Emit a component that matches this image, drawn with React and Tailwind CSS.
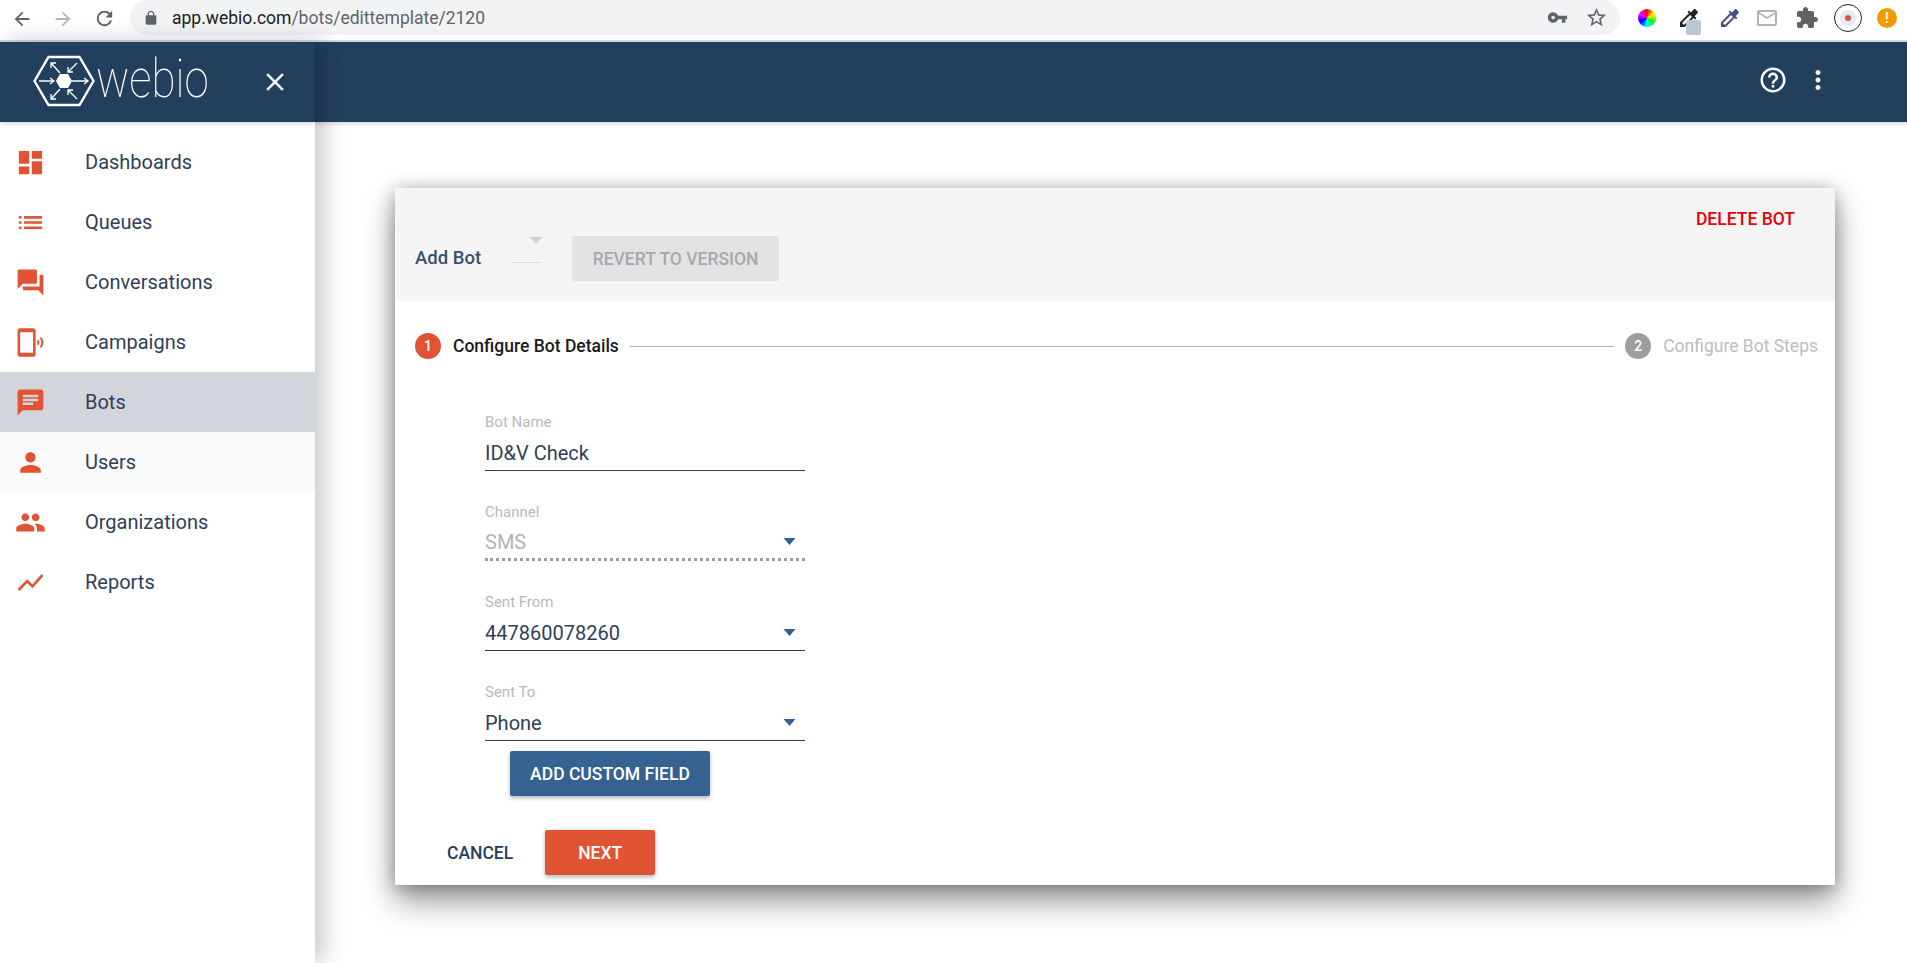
import React from "react";

const ICONS = {
  dashboard: "M3 13h8V3H3v10zm0 8h8v-6H3v6zm10 0h8V11h-8v10zm0-18v6h8V3h-8z",
  list: "M3 13h2v-2H3v2zm0 4h2v-2H3v2zm0-8h2V7H3v2zm4 4h14v-2H7v2zm0 4h14v-2H7v2zM7 7v2h14V7H7z",
  forum: "M21 6h-2v9H6v2c0 .55.45 1 1 1h11l4 4V7c0-.55-.45-1-1-1zm-4 6V3c0-.55-.45-1-1-1H3c-.55 0-1 .45-1 1v14l4-4h10c.55 0 1-.45 1-1z",
  phone: "M20.1 7.7l-1 1c1.8 1.8 1.8 4.6 0 6.5l1 1c2.5-2.3 2.5-6.1 0-8.5zM18 9.8l-1 1c.5.7.5 1.6 0 2.3l1 1c1.2-1.2 1.2-3 0-4.3zM14 1H4c-1.1 0-2 .9-2 2v18c0 1.1.9 2 2 2h10c1.1 0 2-.9 2-2V3c0-1.1-.9-2-2-2zm0 19H4V4h10v16z",
  chat: "M20 2H4c-1.1 0-1.99.9-1.99 2L2 22l4-4h14c1.1 0 2-.9 2-2V4c0-1.1-.9-2-2-2zM6 9h12v2H6V9zm8 5H6v-2h8v2zm4-6H6V6h12v2z",
  person: "M12 12c2.21 0 4-1.79 4-4s-1.79-4-4-4-4 1.79-4 4 1.79 4 4 4zm0 2c-2.67 0-8 1.34-8 4v2h16v-2c0-2.66-5.33-4-8-4z",
  people: "M16 11c1.66 0 2.99-1.34 2.99-3S17.66 5 16 5c-1.66 0-3 1.34-3 3s1.34 3 3 3zm-8 0c1.66 0 2.99-1.34 2.99-3S9.66 5 8 5C6.34 5 5 6.34 5 8s1.34 3 3 3zm0 2c-2.33 0-7 1.17-7 3.5V19h14v-2.5c0-2.33-4.67-3.5-7-3.5zm8 0c-.29 0-.62.02-.97.05 1.16.84 1.97 1.97 1.97 3.45V19h6v-2.5c0-2.33-4.67-3.5-7-3.5z",
  chart: "M3.5 18.49l6-6.01 4 4L22 6.92l-1.41-1.41-7.09 7.97-4-4L2 16.99z",
  help: "M11 18h2v-2h-2v2zm1-16C6.48 2 2 6.48 2 12s4.48 10 10 10 10-4.48 10-10S17.52 2 12 2zm0 18c-4.41 0-8-3.59-8-8s3.59-8 8-8 8 3.59 8 8-3.59 8-8 8zm0-14c-2.21 0-4 1.79-4 4h2c0-1.1.9-2 2-2s2 .9 2 2c0 2-3 1.75-3 5h2c0-2.25 3-2.5 3-5 0-2.21-1.79-4-4-4z",
  more: "M12 8c1.1 0 2-.9 2-2s-.9-2-2-2-2 .9-2 2 .9 2 2 2zm0 2c-1.1 0-2 .9-2 2s.9 2 2 2 2-.9 2-2-.9-2-2-2zm0 6c-1.1 0-2 .9-2 2s.9 2 2 2 2-.9 2-2-.9-2-2-2z",
  close: "M19 6.41L17.59 5 12 10.59 6.41 5 5 6.41 10.59 12 5 17.59 6.41 19 12 13.41 17.59 19 19 17.59 13.41 12z",
  back: "M20 11H7.83l5.59-5.59L12 4l-8 8 8 8 1.41-1.41L7.83 13H20v-2z",
  forward: "M12 4l-1.41 1.41L16.17 11H4v2h12.17l-5.58 5.59L12 20l8-8z",
  reload: "M17.65 6.35C16.2 4.9 14.21 4 12 4c-4.42 0-7.99 3.58-7.99 8s3.57 8 7.99 8c3.73 0 6.84-2.55 7.73-6h-2.08c-.82 2.33-3.04 4-5.65 4-3.31 0-6-2.69-6-6s2.69-6 6-6c1.66 0 3.14.69 4.22 1.78L13 11h7V4l-2.35 2.35z",
  lock: "M18 8h-1V6c0-2.76-2.24-5-5-5S7 3.24 7 6v2H6c-1.1 0-2 .9-2 2v10c0 1.1.9 2 2 2h12c1.1 0 2-.9 2-2V10c0-1.1-.9-2-2-2zM9 6c0-1.66 1.34-3 3-3s3 1.34 3 3v2H9V6z",
  key: "M12.65 10C11.83 7.67 9.61 6 7 6c-3.31 0-6 2.69-6 6s2.69 6 6 6c2.61 0 4.83-1.67 5.65-4H17v4h4v-4h2v-4H12.65zM7 14c-1.1 0-2-.9-2-2s.9-2 2-2 2 .9 2 2-.9 2-2 2z",
  star: "M22 9.24l-7.19-.62L12 2 9.19 8.63 2 9.24l5.46 4.73L5.82 21 12 17.27 18.18 21l-1.63-7.03L22 9.24zM12 15.4l-3.76 2.27 1-4.28-3.32-2.88 4.38-.38L12 6.1l1.71 4.04 4.38.38-3.32 2.88 1 4.28L12 15.4z",
  puzzle: "M20.5 11H19V7c0-1.1-.9-2-2-2h-4V3.5C13 2.12 11.88 1 10.5 1S8 2.12 8 3.5V5H4c-1.1 0-1.99.9-1.99 2v3.8H3.5c1.49 0 2.7 1.21 2.7 2.7s-1.21 2.7-2.7 2.7H2V20c0 1.1.9 2 2 2h3.8v-1.5c0-1.49 1.21-2.7 2.7-2.7 1.49 0 2.7 1.21 2.7 2.7V22H17c1.1 0 2-.9 2-2v-4h1.5c1.38 0 2.5-1.12 2.5-2.5S21.88 11 20.5 11z",
  mail: "M20 4H4c-1.1 0-1.99.9-1.99 2L2 18c0 1.1.9 2 2 2h16c1.1 0 2-.9 2-2V6c0-1.1-.9-2-2-2zm0 14H4V8l8 5 8-5v10zm-8-7L4 6h16l-8 5z",
  dropper: "M20.71 5.63l-2.34-2.34c-.39-.39-1.02-.39-1.41 0l-3.12 3.12-1.93-1.91-1.41 1.41 1.42 1.42L3 16.25V21h4.75l8.92-8.92 1.42 1.42 1.41-1.41-1.92-1.92 3.12-3.12c.4-.4.4-1.03.01-1.42zM6.92 19L5 17.08l8.06-8.06 1.92 1.92L6.92 19z",
};

function Icon({ name, className }) {
  return (
    <svg viewBox="0 0 24 24" fill="currentColor" className={className}>
      <path d={ICONS[name]} />
    </svg>
  );
}

function Logo() {
  return (
    <svg viewBox="0 0 62 52" className="mb-[3px] h-[52px] w-[62px]" fill="none" stroke="#fff" strokeWidth="1.3">
      <path d="M1.5 26L15.5 2H46.5L60.5 26L46.5 50H15.5Z" strokeWidth="2.4" />
      <path d="M23 26L27 19H35L39 26L35 33H27Z" fill="#fff" stroke="none" />
      <path d="M6 26H21M17 23L21 26L17 29" />
      <path d="M39 26H55M51 23L55 26L51 29" />
      <path d="M27 18L18 8M18 13V8H23" />
      <path d="M44 8L35 17M35 12V17H40" />
      <path d="M27 34L18 44M18 39V44H23" />
      <path d="M44 44L35 35M35 40V35H40" />
    </svg>
  );
}

function ChromeBar() {
  return (
    <div className="flex h-[42px] shrink-0 border-b-2 border-[#cfdbe6] bg-white">
      <div className="flex w-[130px] items-center gap-[19px] pb-[3px] pl-[11px] text-[#5f6368]">
        <Icon name="back" className="h-[22px] w-[22px]" />
        <Icon name="forward" className="h-[22px] w-[22px] text-[#b4b7ba]" />
        <Icon name="reload" className="h-[23px] w-[23px]" />
      </div>
      <div className="flex h-[35px] w-[1490px] items-center rounded-full bg-[#f1f3f4] pl-[13px] pr-[12px]">
        <Icon name="lock" className="h-[16px] w-[16px] text-[#5f6368]" />
        <span className="ml-[13px] pt-[2px] text-[17.5px] leading-none text-[#5f6368]">
          <span className="text-[#202124]">app.webio.com</span>/bots/edittemplate/2120
        </span>
        <div className="ml-auto flex items-center gap-[17px] text-[#5f6368]">
          <Icon name="key" className="h-[21px] w-[21px]" />
          <Icon name="star" className="h-[23px] w-[23px]" />
        </div>
      </div>
      <div className="flex flex-1 items-center pb-1 pl-[18px]">
        <span className="h-[18px] w-[18px] rounded-full bg-[conic-gradient(#ff0000,#ffff00,#00ff00,#00ffff,#0000ff,#ff00ff,#ff0000)]" />
        <span className="relative ml-[21px]">
          <Icon name="dropper" className="h-[24px] w-[24px] text-[#222]" />
          <span className="absolute left-[9px] top-[14px] h-[15px] w-[15px] rounded-[2px] bg-[#b9c7d6]" />
        </span>
        <Icon name="dropper" className="ml-[17px] h-[24px] w-[24px] text-[#4a4f7a]" />
        <Icon name="mail" className="ml-[13px] h-[24px] w-[24px] text-[#b0b3b6]" />
        <Icon name="puzzle" className="ml-[16px] h-[24px] w-[24px] text-[#5f6368]" />
        <span className="ml-[15px] flex h-[28px] w-[28px] items-center justify-center rounded-full border border-[#222]">
          <span className="h-[6px] w-[6px] rounded-full bg-[#d9534f] shadow-[0_0_0_5px_#e6e9f0]" />
        </span>
        <span className="ml-[15px] flex h-[20px] w-[20px] items-center justify-center rounded-full bg-[#f29900] text-[14px] font-bold leading-none text-white">!</span>
      </div>
    </div>
  );
}

const NAV = [
  { icon: "dashboard", label: "Dashboards" },
  { icon: "list", label: "Queues" },
  { icon: "forum", label: "Conversations" },
  { icon: "phone", label: "Campaigns" },
  { icon: "chat", label: "Bots", bg: "bg-[#d2d6dc]" },
  { icon: "person", label: "Users", bg: "bg-[#fafafa]" },
  { icon: "people", label: "Organizations" },
  { icon: "chart", label: "Reports" },
];

function Sidebar() {
  return (
    <aside className="z-20 flex w-[315px] shrink-0 flex-col bg-white shadow-[8px_0_22px_rgba(0,0,0,0.22)]">
      <div className="flex h-[80px] shrink-0 items-center bg-[#233f5e] pl-[33px] shadow-[0_2px_4px_rgba(0,0,0,0.15)]">
        <Logo />
        <span className="ml-[1px] inline-block w-[112px] origin-left scale-x-[0.83] pb-[5px] text-[53px] font-thin leading-none text-white">
          webio
        </span>
        <Icon name="close" className="ml-[52px] h-[30px] w-[30px] text-white" />
      </div>
      <nav className="pt-[10px]">
        {NAV.map((item) => (
          <div key={item.label} className={`flex h-[60px] items-center ${item.bg || ""}`}>
            <Icon name={item.icon} className="ml-[15px] h-[31px] w-[31px] text-[#e15433]" />
            <span className="ml-[39px] text-[20px] text-[#2f4058]">{item.label}</span>
          </div>
        ))}
      </nav>
    </aside>
  );
}

function Caret({ className }) {
  return (
    <svg viewBox="0 0 12 7" className={className} fill="currentColor">
      <path d="M0 0H12L6 7Z" />
    </svg>
  );
}

function Field({ label, value, select, disabled }) {
  return (
    <div className="w-[320px]">
      <div className="text-[15px] leading-[18px] text-[#b9b9b9]">{label}</div>
      <div
        className={`mt-[5px] flex h-[35px] items-center justify-between pb-[1px] text-[20px] ${
          disabled
            ? "border-b-[3px] border-dotted border-[#9a9ea3] text-[#b3b3b3]"
            : "border-b-[1.5px] border-[#2f4058] text-[#2f4058]"
        }`}
      >
        <span>{value}</span>
        {select && <Caret className="mr-[9px] h-[7px] w-[13px] text-[#345f8f]" />}
      </div>
    </div>
  );
}

function Card() {
  return (
    <div className="w-[1440px] bg-white shadow-[0_16px_30px_rgba(0,0,0,0.4),0_2px_16px_rgba(0,0,0,0.28)]">
      <div className="flex h-[113px] bg-[#f5f5f5] pl-[20px] pr-[40px]">
        <div className="flex items-center self-end pb-[19px]">
          <span className="pt-[1px] text-[18.5px] font-medium text-[#37506f]">Add Bot</span>
          <div className="mb-[19px] ml-[31px] flex h-[28px] w-[30px] justify-end border-b border-[#dcdcdc]">
            <Caret className="mt-[2px] h-[7px] w-[12px] text-[#cfcfcf]" />
          </div>
          <button className="ml-[30px] h-[45px] w-[207px] rounded-[2px] bg-[#e3e3e3] pt-[1px] text-[17.5px] font-medium text-[#a3a9b1]">
            REVERT TO VERSION
          </button>
        </div>
        <div className="ml-auto pt-[22px] text-[17.5px] font-medium leading-[18px] text-[#e8000d]">DELETE BOT</div>
      </div>

      <div className="flex h-[75px] items-center pl-[20px] pr-[17px] pt-[15px]">
        <span className="flex h-[26px] w-[26px] items-center justify-center rounded-full bg-[#e15433] text-[14px] font-medium text-white">1</span>
        <span className="ml-[12px] text-[17.5px] font-medium text-[#1a1a1a]">Configure Bot Details</span>
        <span className="mx-[11px] h-px flex-1 bg-[#b5b5b5]" />
        <span className="flex h-[26px] w-[26px] items-center justify-center rounded-full bg-[#9e9e9e] text-[14px] font-medium text-white">2</span>
        <span className="ml-[12px] text-[17.5px] text-[#bdbdbd]">Configure Bot Steps</span>
      </div>

      <div className="flex flex-col gap-[32px] pl-[90px] pt-[37px]">
        <Field label="Bot Name" value="ID&V Check" />
        <Field label="Channel" value="SMS" select disabled />
        <Field label="Sent From" value="447860078260" select />
        <Field label="Sent To" value="Phone" select />
      </div>

      <button className="ml-[115px] mt-[10px] block h-[45px] w-[200px] rounded-[2px] bg-[#356291] pt-[1px] text-[17.5px] font-medium text-white shadow-[0_2px_4px_rgba(0,0,0,0.3)]">
        ADD CUSTOM FIELD
      </button>

      <div className="mt-[34px] flex items-center pb-[10px] pl-[52px]">
        <span className="pt-[1px] text-[17.5px] font-medium text-[#233f5e]">CANCEL</span>
        <button className="ml-[32px] h-[45px] w-[110px] rounded-[2px] bg-[#e15433] pt-[1px] text-[17.5px] font-medium text-white shadow-[0_2px_4px_rgba(0,0,0,0.3)]">
          NEXT
        </button>
      </div>
    </div>
  );
}

export default function App() {
  return (
    <div className="flex h-screen flex-col overflow-hidden bg-white font-['Roboto',sans-serif]">
      <ChromeBar />
      <div className="flex min-h-0 flex-1">
        <Sidebar />
        <main className="flex-1">
          <div className="flex h-[80px] items-center justify-end bg-[#233f5e] pb-[4px] pr-[74px] shadow-[0_2px_4px_rgba(0,0,0,0.15)]">
            <Icon name="help" className="h-[30px] w-[30px] text-white" />
            <Icon name="more" className="ml-[15px] h-[30px] w-[30px] text-white" />
          </div>
          <div className="pl-[80px] pt-[66px]">
            <Card />
          </div>
        </main>
      </div>
    </div>
  );
}
